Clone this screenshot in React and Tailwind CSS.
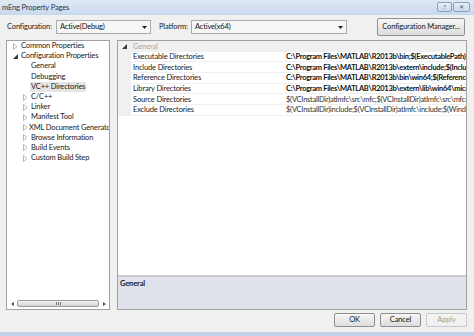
import React from "react";

const font = { fontFamily: 'Lato, "Noto Sans", "Liberation Sans", sans-serif' };

function Arrow({ open }) {
  if (open) {
    return (
      <svg width="5" height="5" viewBox="0 0 5 5" className="shrink-0">
        <path d="M5 0 L5 5 L0 5 Z" fill="#3a3a3a" />
      </svg>
    );
  }
  return (
    <svg width="5" height="7" viewBox="0 0 5 7" className="shrink-0">
      <path d="M0.5 0.5 L4 3.5 L0.5 6.5 Z" fill="none" stroke="#a6a6a6" strokeWidth="0.8" />
    </svg>
  );
}

function TreeItem({ label, level, arrow, selected }) {
  return (
    <div className="flex items-center h-[10.2px]" style={{ paddingLeft: level === 0 ? 6 : 16 }}>
      <div className="w-[7px] flex items-center">{arrow ? <Arrow open={arrow === "open"} /> : null}</div>
      <span className={"px-[1px] leading-[10px] whitespace-nowrap " + (selected ? "bg-[#e5e5e5]" : "")}>{label}</span>
    </div>
  );
}

function Dropdown({ value, w }) {
  return (
    <div className={"h-[14px] border border-[#a5acb5] bg-[#f6f6f6] flex items-center justify-between pl-[3px] pr-[3px] shrink-0 " + w}>
      <span className="text-[#111] whitespace-nowrap">{value}</span>
      <svg width="5" height="3" viewBox="0 0 5 3">
        <path d="M0 0 L5 0 L2.5 3 Z" fill="#222" />
      </svg>
    </div>
  );
}

function Btn({ label, disabled, w }) {
  return (
    <div
      className={
        "h-[14px] rounded-[2px] border flex items-center justify-center bg-gradient-to-b " +
        (disabled ? "border-[#c8c8c8] text-[#a0a0a0] from-[#f4f4f4] to-[#f0f0f0]" : "border-[#8e8f8f] text-[#111] from-[#f6f6f6] to-[#dddddd]") +
        " " +
        w
      }
    >
      {label}
    </div>
  );
}

const rows = [
  ["Executable Directories", "C:\\Program Files\\MATLAB\\R2013b\\bin;$(ExecutablePath);", true],
  ["Include Directories", "C:\\Program Files\\MATLAB\\R2013b\\extern\\include;$(IncludePath)", true],
  ["Reference Directories", "C:\\Program Files\\MATLAB\\R2013b\\bin\\win64;$(ReferencePath)", true],
  ["Library Directories", "C:\\Program Files\\MATLAB\\R2013b\\extern\\lib\\win64\\microsoft", true],
  ["Source Directories", "$(VCInstallDir)atlmfc\\src\\mfc;$(VCInstallDir)atlmfc\\src\\mfcm;", false],
  ["Exclude Directories", "$(VCInstallDir)include;$(VCInstallDir)atlmfc\\include;$(WindowsSdkDir)", false],
];

export default function App() {
  return (
    <div className="w-[474px] h-[336px] bg-[#f0f0f0] flex flex-col overflow-hidden text-[7.5px] tracking-[-0.15px] text-[#1a1a1a]" style={font}>
      {/* title bar */}
      <div className="h-[15px] shrink-0 bg-gradient-to-b from-[#dfe9f5] to-[#c8d8ec] flex items-center justify-between pl-[2px] pr-[4px]">
        <span className="text-[#1f3550]">mEng Property Pages</span>
        <div className="flex gap-[1px] mt-[-2px]">
          <div className="w-[15px] h-[10px] rounded-[2px] border border-[#8aa0bc] bg-gradient-to-b from-[#e8eff8] to-[#c9d7e9] flex items-center justify-center text-[6px] text-[#4a5a70] leading-none">?</div>
          <div className="w-[17px] h-[10px] rounded-[2px] border border-[#8aa0bc] bg-gradient-to-b from-[#e8eff8] to-[#c9d7e9] flex items-center justify-center text-[6px] text-[#4a5a70] leading-none">✕</div>
        </div>
      </div>

      {/* config row */}
      <div className="h-[24px] shrink-0 flex items-center pl-[7px] pr-[9px]">
        <span className="w-[49px] shrink-0 whitespace-nowrap">Configuration:</span>
        <Dropdown value="Active(Debug)" w="w-[95px]" />
        <span className="ml-[8px] w-[32px] shrink-0 whitespace-nowrap">Platform:</span>
        <Dropdown value="Active(x64)" w="w-[156px]" />
        <div className="flex-1" />
        <div className="h-[18px] w-[88px] shrink-0 whitespace-nowrap rounded-[2px] border border-[#8e8f8f] bg-gradient-to-b from-[#f7f7f7] to-[#dcdcdc] flex items-center justify-center">Configuration Manager...</div>
      </div>

      {/* main */}
      <div className="h-[270px] shrink-0 flex pl-[6px] pr-[7px] gap-[7px] mt-[1px]">
        {/* tree */}
        <div className="w-[104px] shrink-0 border border-[#a0a0a0] bg-white flex flex-col overflow-hidden">
          <div className="flex-1">
            <TreeItem label="Common Properties" level={0} arrow="closed" />
            <TreeItem label="Configuration Properties" level={0} arrow="open" />
            <TreeItem label="General" level={1} />
            <TreeItem label="Debugging" level={1} />
            <TreeItem label="VC++ Directories" level={1} selected />
            <TreeItem label="C/C++" level={1} arrow="closed" />
            <TreeItem label="Linker" level={1} arrow="closed" />
            <TreeItem label="Manifest Tool" level={1} arrow="closed" />
            <TreeItem label="XML Document Generator" level={1} arrow="closed" />
            <TreeItem label="Browse Information" level={1} arrow="closed" />
            <TreeItem label="Build Events" level={1} arrow="closed" />
            <TreeItem label="Custom Build Step" level={1} arrow="closed" />
          </div>
          {/* scrollbar */}
          <div className="h-[9px] mb-[1px] flex items-center px-[1px] gap-[1px]">
            <div className="w-[8px] flex items-center justify-center">
              <svg width="3" height="4" viewBox="0 0 3 4"><path d="M3 0 L0 2 L3 4 Z" fill="#555" /></svg>
            </div>
            <div className="flex-1 h-[7px] rounded-[2px] border border-[#9c9c9c] bg-gradient-to-b from-[#f2f2f2] to-[#d4d4d4] flex items-center justify-center">
              <div className="flex gap-[1px]">
                <div className="w-[1px] h-[3px] bg-[#777]" />
                <div className="w-[1px] h-[3px] bg-[#777]" />
                <div className="w-[1px] h-[3px] bg-[#777]" />
              </div>
            </div>
            <div className="w-[8px] flex items-center justify-center">
              <svg width="3" height="4" viewBox="0 0 3 4"><path d="M0 0 L3 2 L0 4 Z" fill="#555" /></svg>
            </div>
          </div>
        </div>

        {/* property grid */}
        <div className="flex-1 border border-[#a0a0a0] flex flex-col overflow-hidden">
          <div className="flex-1 bg-white flex flex-col">
            <div className="flex h-[10.7px] bg-[#f0f0f0] items-center">
              <div className="w-[13px] flex items-center justify-center">
                <Arrow open />
              </div>
              <span className="text-[#a8a8a8] ml-[2px]">General</span>
            </div>
            {rows.map(([n, v, b]) => (
              <div key={n} className="flex h-[10.7px]">
                <div className="w-[13px] bg-[#f0f0f0] shrink-0" />
                <div className="w-[154px] shrink-0 pl-[2px] border-b border-[#f0f0f0] flex items-center whitespace-nowrap">{n}</div>
                <div className={"flex-1 pl-[1px] border-b border-[#f0f0f0] flex items-center whitespace-nowrap overflow-hidden " + (b ? "font-bold text-[#111] tracking-[-0.3px]" : "text-[#333] tracking-[-0.25px]")}>{v}</div>
              </div>
            ))}
          </div>
          <div className="h-[34px] shrink-0 border-t-2 border-[#c9cbd0] bg-[#dfe2ea] px-[2px] pt-[1px]">
            <span className="font-bold">General</span>
          </div>
        </div>
      </div>

      {/* buttons */}
      <div className="flex-1 flex items-center justify-end gap-[5px] pr-[7px] pb-[2px]">
        <Btn label="OK" w="w-[41px]" />
        <Btn label="Cancel" w="w-[41px]" />
        <Btn label="Apply" w="w-[41px]" disabled />
      </div>
      <div className="h-[4px] shrink-0 bg-[#bfd1e8]" />
    </div>
  );
}
